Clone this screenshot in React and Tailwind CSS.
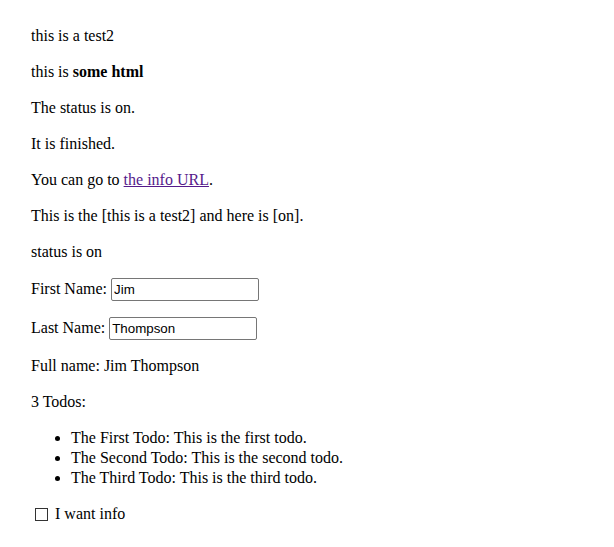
import React, { useState } from 'react';

const todos = [
  { title: 'The First Todo', body: 'This is the first todo.' },
  { title: 'The Second Todo', body: 'This is the second todo.' },
  { title: 'The Third Todo', body: 'This is the third todo.' },
];

const App = () => {
  const [first, setFirst] = useState('Jim');
  const [last, setLast] = useState('Thompson');
  const [wantInfo, setWantInfo] = useState(false);

  const inputCls =
    "inline-block align-baseline w-[148px] h-[23px] border border-[#767676] rounded-[2px] bg-white px-[2px] py-[1px] text-[13.33px] text-black font-['Liberation_Sans',Arial,sans-serif] outline-none";

  return (
    <div className="min-h-screen bg-white pt-[10px] pl-[31px] pr-2 text-base leading-5 text-black font-['Liberation_Serif','Times_New_Roman',serif]">
      <p className="my-4">this is a test2</p>
      <p className="my-4">
        this is <b className="font-bold">some html</b>
      </p>
      <p className="my-4">The status is on.</p>
      <p className="my-4">It is finished.</p>
      <p className="my-4">
        You can go to{' '}
        <a href="#" className="text-[#551a8b] underline">
          the info URL
        </a>
        .
      </p>
      <p className="my-4">This is the [this is a test2] and here is [on].</p>
      <p className="my-4">status is on</p>
      <p className="my-4">
        First Name:{' '}
        <input className={inputCls} value={first} onChange={(e) => setFirst(e.target.value)} />
      </p>
      <p className="my-4">
        Last Name:{' '}
        <input className={inputCls} value={last} onChange={(e) => setLast(e.target.value)} />
      </p>
      <p className="my-4">
        Full name: {first} {last}
      </p>
      <p className="my-4">{todos.length} Todos:</p>
      <ul className="my-4 list-disc pl-10">
        {todos.map((t) => (
          <li key={t.title}>
            {t.title}: {t.body}
          </li>
        ))}
      </ul>
      <div className="my-4 flex items-center">
        <input
          type="checkbox"
          checked={wantInfo}
          onChange={(e) => setWantInfo(e.target.checked)}
          className="ml-1 mr-[7px] h-[13px] w-[13px] appearance-none border border-[#333] bg-white"
        />
        <span>I want info</span>
      </div>
    </div>
  );
};

export default App;
